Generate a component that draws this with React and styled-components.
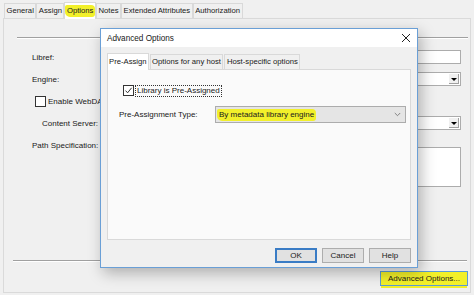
import React from 'react';
import styled, { createGlobalStyle } from 'styled-components';

const GlobalStyle = createGlobalStyle`
  html, body {
    margin: 0;
    background: #f0f0f0;
  }
  body {
    font-family: "Liberation Sans", Arial, sans-serif;
    font-size: 8px;
    color: #202020;
  }
`;

const Screen = styled.div`
  position: relative;
  width: 474px;
  height: 295px;
  overflow: hidden;
  background: #f0f0f0;
  display: flex;
  flex-direction: column;
`;

const TabStrip = styled.div`
  display: flex;
  align-items: flex-end;
  height: 18px;
  padding-left: ${(p) => p.$indent ?? 4}px;
  box-sizing: border-box;
`;

const Tab = styled.div`
  position: relative;
  height: ${(p) => (p.$active ? 17 : 15)}px;
  line-height: ${(p) => (p.$active ? 15 : 14)}px;
  padding: 0 ${(p) => p.$pad ?? 1.5}px;
  margin-right: ${(p) => p.$gap ?? 0}px;
  font-size: 7.7px;
  border: 1px solid #d9d9d9;
  border-bottom: none;
  background: ${(p) => (p.$active ? '#ffffff' : '#f0f0f0')};
  box-sizing: border-box;
  white-space: nowrap;
  z-index: ${(p) => (p.$active ? 1 : 0)};
  margin-bottom: ${(p) => (p.$active ? -1 : 0)}px;
`;

const Marker = styled.span`
  background: #f2f02a;
  border-radius: 2px 4px 3px 5px;
  padding: 1px 2px 2px;
  margin: 0 -2px;
  box-decoration-break: clone;
`;

const Panel = styled.div`
  flex: 1;
  margin: 0 3px 2px;
  border: 1px solid #dadada;
  background: #f0f0f0;
  display: flex;
  flex-direction: column;
`;

const Rule = styled.div`
  height: 0;
  border-top: 1px solid #a0a0a0;
  border-bottom: 1px solid #ffffff;
  margin: ${(p) => p.$top || 0}px ${(p) => p.$right || 2}px 0 ${(p) => p.$left || 13}px;
`;

const Form = styled.div`
  display: flex;
  flex-direction: column;
  gap: 8px;
  padding: 11px 9px 0 28px;
`;

const Row = styled.div`
  display: flex;
  align-items: center;
  height: 14px;
  padding-left: ${(p) => p.$indent || 0}px;
`;

const Label = styled.span`
  white-space: nowrap;
`;

const Field = styled.div`
  margin-left: auto;
  width: 350px;
  height: ${(p) => p.$h || 14}px;
  box-sizing: border-box;
  border: 1px solid #acacac;
  background: #ffffff;
  display: flex;
  justify-content: flex-end;
`;

const ComboArrow = styled.div`
  width: 10px;
  margin: 1px;
  border-left: 1px solid #ffffff;
  background: #f0f0f0;
  box-shadow: inset -1px -1px 0 #a0a0a0;
  display: flex;
  align-items: center;
  justify-content: center;
  &::after {
    content: '';
    border-left: 3px solid transparent;
    border-right: 3px solid transparent;
    border-top: 3px solid #000;
  }
`;

const Box = styled.span`
  width: 11px;
  height: 11px;
  box-sizing: border-box;
  border: 1px solid #333;
  background: #fff;
  margin-right: 2px;
  display: inline-flex;
  align-items: center;
  justify-content: center;
  flex: none;
`;

const Spacer = styled.div`
  flex: 1;
`;

const Footer = styled.div`
  display: flex;
  justify-content: flex-end;
  padding: 9px 2px 6px 0;
`;

const WinButton = styled.button`
  font: inherit;
  color: #202020;
  height: 15px;
  width: ${(p) => p.$w || 42}px;
  padding: 0;
  box-sizing: border-box;
  background: #e1e1e1;
  border: 1px solid ${(p) => (p.$default ? '#3a7cc5' : '#adadad')};
  box-shadow: ${(p) => (p.$default ? 'inset 0 0 0 1px #3a7cc5' : 'none')};
  display: flex;
  align-items: center;
  justify-content: center;
`;

const MarkedButton = styled(WinButton)`
  background: #f2f02a;
  border-color: #5b9bd8;
  box-shadow: 0 3px 0 -1px #f2f02a;
`;

/* the modal dialog floats over the background window */
const Dialog = styled.div`
  position: absolute;
  left: 100px;
  top: 28px;
  width: 318px;
  height: 240px;
  box-sizing: border-box;
  border: 1px solid #6a9fd6;
  background: #f0f0f0;
  box-shadow: 3px 5px 14px rgba(0, 0, 0, 0.28);
  display: flex;
  flex-direction: column;
`;

const TitleBar = styled.div`
  height: 21px;
  background: #ffffff;
  display: flex;
  align-items: center;
  padding: 0 6px;
  font-size: 8.2px;
`;

const Close = styled.div`
  margin-left: auto;
  display: flex;
`;

const DialogBody = styled.div`
  flex: 1;
  display: flex;
  flex-direction: column;
  padding: 4px 6px 4px;
`;

const TabPage = styled.div`
  height: 171px;
  box-sizing: border-box;
  border: 1px solid #d9d9d9;
  background: #fafafa;
  padding: 15px 4px 0 11px;
  display: flex;
  flex-direction: column;
`;

const CheckRow = styled.div`
  display: flex;
  align-items: center;
  padding-left: 4px;
  height: 11px;
`;

const FocusLabel = styled.span`
  outline: 1px dotted #333;
  outline-offset: 0;
  padding: 0 1px;
  line-height: 10px;
`;

const TypeRow = styled.div`
  display: flex;
  align-items: center;
  margin-top: 10px;
  height: 17px;
`;

const Select = styled.div`
  margin-left: auto;
  width: 191px;
  height: 17px;
  box-sizing: border-box;
  border: 1px solid #acacac;
  background: #e5e5e5;
  display: flex;
  align-items: center;
  padding: 0 4px 0 3px;
`;

const ButtonRow = styled.div`
  display: flex;
  justify-content: flex-end;
  gap: 5px;
  margin-top: 8px;
`;

const Check = () => (
  <svg width="9" height="9" viewBox="0 0 9 9">
    <path d="M1.5 4.6 L3.6 6.8 L7.6 1.8" fill="none" stroke="#333" strokeWidth="1" />
  </svg>
);

const Chevron = () => (
  <svg width="7" height="5" viewBox="0 0 7 5" style={{ marginLeft: 'auto' }}>
    <path d="M0.8 1 L3.5 3.7 L6.2 1" fill="none" stroke="#777" strokeWidth="0.9" />
  </svg>
);

export default function App() {
  return (
    <>
      <GlobalStyle />
      <Screen>
        <TabStrip>
          <Tab>General</Tab>
          <Tab>Assign</Tab>
          <Tab $active>
            <Marker>Options</Marker>
          </Tab>
          <Tab>Notes</Tab>
          <Tab>Extended Attributes</Tab>
          <Tab>Authorization</Tab>
        </TabStrip>
        <Panel>
          <Rule $top={18} />
          <Form>
            <Row>
              <Label>Libref:</Label>
              <Field />
            </Row>
            <Row>
              <Label>Engine:</Label>
              <Field>
                <ComboArrow />
              </Field>
            </Row>
            <Row $indent={3}>
              <Box />
              <Label>Enable WebDAV support</Label>
            </Row>
            <Row $indent={10}>
              <Label>Content Server:</Label>
              <Field>
                <ComboArrow />
              </Field>
            </Row>
            <Row>
              <Label>Path Specification:</Label>
            </Row>
            <Row>
              <Field $h={40} />
            </Row>
          </Form>
          <Spacer />
          <Rule $left={9} $right={3} />
          <Footer>
            <MarkedButton $w={88}>Advanced Options...</MarkedButton>
          </Footer>
        </Panel>

        <Dialog>
          <TitleBar>
            Advanced Options
            <Close>
              <svg width="10" height="10" viewBox="0 0 10 10">
                <path d="M1 1 L9 9 M9 1 L1 9" stroke="#222" strokeWidth="1" />
              </svg>
            </Close>
          </TitleBar>
          <DialogBody>
            <TabStrip $indent={0}>
              <Tab $active $pad={1} $gap={1}>Pre-Assign</Tab>
              <Tab $pad={1.5} $gap={1}>Options for any host</Tab>
              <Tab $pad={1.5}>Host-specific options</Tab>
            </TabStrip>
            <TabPage>
              <CheckRow>
                <Box>
                  <Check />
                </Box>
                <FocusLabel>Library is Pre-Assigned</FocusLabel>
              </CheckRow>
              <TypeRow>
                <Label>Pre-Assignment Type:</Label>
                <Select>
                  <Marker>By metadata library engine</Marker>
                  <Chevron />
                </Select>
              </TypeRow>
            </TabPage>
            <ButtonRow>
              <WinButton $default>OK</WinButton>
              <WinButton>Cancel</WinButton>
              <WinButton>Help</WinButton>
            </ButtonRow>
          </DialogBody>
        </Dialog>
      </Screen>
    </>
  );
}
